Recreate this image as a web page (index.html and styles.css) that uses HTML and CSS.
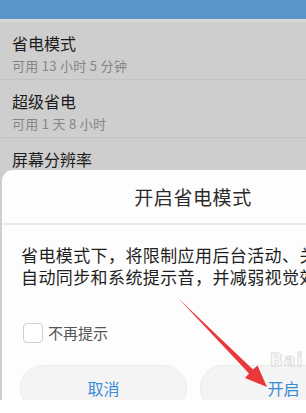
FILE: index.html
```html
<!DOCTYPE html>
<html lang="zh">
<head>
<meta charset="utf-8">
<link rel="stylesheet" href="styles.css">
</head>
<body>
<div class="screen">
  <div class="topbar"></div>
  <div class="strip"></div>
  <div class="list">
    <div class="row">
      <div class="row-title">省电模式</div>
      <div class="row-sub">可用 13 小时 5 分钟</div>
    </div>
    <div class="row">
      <div class="row-title">超级省电</div>
      <div class="row-sub">可用 1 天 8 小时</div>
    </div>
    <div class="row">
      <div class="row-title">屏幕分辨率</div>
    </div>
  </div>

  <div class="dialog">
    <div class="dialog-title">开启省电模式</div>
    <div class="dialog-body">
      <div class="body-line">省电模式下，将限制应用后台活动、关闭</div>
      <div class="body-line">自动同步和系统提示音，并减弱视觉效果。</div>
    </div>
    <label class="check-row">
      <span class="checkbox"></span>
      <span class="check-label">不再提示</span>
    </label>
    <div class="buttons">
      <div class="btn">取消</div>
      <div class="btn">开启</div>
    </div>
  </div>

  <div class="watermark">Bai</div>

  <svg class="arrow" width="306" height="413" viewBox="0 0 306 413">
    <polygon points="178,298 253,369.5 257.5,365.5 267,387 245,378 249,373.5" fill="#e8383b"/>
  </svg>

  <div class="bottom-strip"></div>
</div>
</body>
</html>
```

FILE: styles.css
```css
html, body {
  margin: 0;
  padding: 0;
}
body {
  font-family: "Noto Sans CJK SC", "Noto Sans", sans-serif;
  background: #ffffff;
}
.screen {
  position: relative;
  width: 306px;
  height: 413px;
  overflow: hidden;
  background: #cecece;
}
.topbar {
  height: 19px;
  background: #5b94c9;
}
.strip {
  height: 3px;
  background: #d9d9d9;
}
.list {
  display: flex;
  flex-direction: column;
}
.row {
  padding: 11px 12px 4px;
  border-bottom: 1px solid #c2c2c2;
}
.row-title {
  font-size: 16px;
  line-height: 20px;
  color: #1c1c1c;
}
.row-sub {
  margin-top: 4px;
  font-size: 13px;
  line-height: 18px;
  color: #858585;
  letter-spacing: 0.3px;
}
.dialog {
  position: absolute;
  top: 170px;
  left: 2px;
  width: 382px;
  height: 260px;
  background: #fdfdfd;
  border-radius: 11px 11px 0 0;
}
.dialog-title {
  height: 53px;
  line-height: 53px;
  text-align: center;
  font-size: 19px;
  letter-spacing: 0.6px;
  color: #2a2a2a;
  border-bottom: 2px solid #e9e9e9;
}
.dialog-body {
  display: flex;
  flex-direction: column;
  padding: 19px 0 0 19px;
}
.body-line {
  font-size: 17px;
  line-height: 22px;
  letter-spacing: 0.4px;
  color: #1f1f1f;
  white-space: nowrap;
}
.check-row {
  display: flex;
  align-items: center;
  gap: 5px;
  margin: 35px 0 0 21px;
}
.checkbox {
  width: 18px;
  height: 18px;
  border: 1px solid #cfcfcf;
  border-radius: 4px;
  background: #ffffff;
}
.check-label {
  font-size: 15px;
  line-height: 20px;
  color: #555555;
}
.buttons {
  display: flex;
  gap: 13px;
  margin: 22px 0 0 18px;
}
.btn {
  width: 165px;
  height: 44px;
  line-height: 44px;
  border: 1px solid #ebebeb;
  border-radius: 23px;
  background: #f4f4f4;
  text-align: center;
  font-size: 16px;
  color: #3a8bd6;
}
.watermark {
  position: absolute;
  top: 350px;
  left: 270px;
  font-family: "DejaVu Sans", sans-serif;
  font-size: 17px;
  font-weight: bold;
  color: transparent;
  -webkit-text-stroke: 1px #dcdcdc;
  letter-spacing: 1px;
}
.arrow {
  position: absolute;
  top: 0;
  left: 0;
}
.bottom-strip {
  position: absolute;
  left: 0;
  bottom: 0;
  width: 306px;
  height: 13px;
  background: #ffffff;
}
```
